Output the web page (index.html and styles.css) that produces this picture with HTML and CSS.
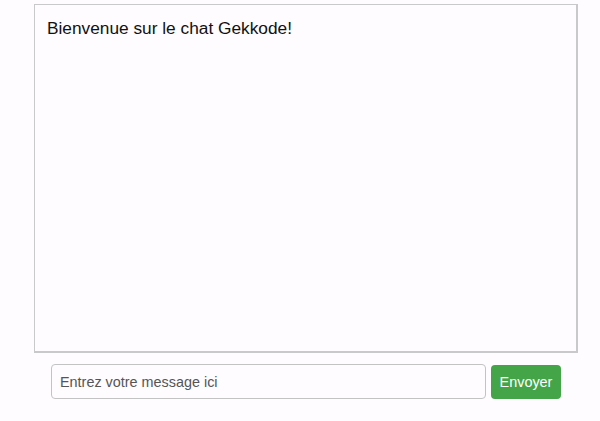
FILE: index.html
```html
<!DOCTYPE html>
<html lang="fr">
<head>
<meta charset="utf-8">
<title>Chat Gekkode</title>
<link rel="stylesheet" href="styles.css">
</head>
<body>
<div class="chat">
  <div class="messages">
    <p class="message">Bienvenue sur le chat Gekkode!</p>
  </div>
  <form class="composer">
    <input class="field" type="text" placeholder="Entrez votre message ici">
    <button class="send" type="button">Envoyer</button>
  </form>
</div>
</body>
</html>
```
FILE: styles.css
```css
html, body {
  margin: 0;
  padding: 0;
  background: #fefcfe;
  font-family: "Liberation Sans", Arial, sans-serif;
}
.chat {
  padding-top: 4px;
  display: flex;
  flex-direction: column;
}
.messages {
  box-sizing: border-box;
  margin-left: 34px;
  width: 544px;
  height: 349px;
  border: 1px solid #c9c8ca;
  border-width: 1px 2px 2px 1px;
  background: #fefcfe;
  padding: 12px 12px;
}
.message {
  margin: 0;
  font-size: 17.3px;
  line-height: 22px;
  color: #111;
}
.composer {
  display: flex;
  align-items: center;
  margin: 11px 0 0 51px;
  gap: 5px;
}
.field {
  box-sizing: border-box;
  width: 435px;
  height: 35px;
  border: 1px solid #c3c3c3;
  border-radius: 4px;
  padding: 0 8px;
  font-family: "Liberation Sans", Arial, sans-serif;
  font-size: 14.4px;
  background: #fefcfe;
  color: #333;
}
.field::placeholder {
  color: #555;
}
.send {
  box-sizing: border-box;
  width: 70px;
  height: 34px;
  border: none;
  border-radius: 4px;
  background: #43a548;
  color: #fff;
  font-family: "Liberation Sans", Arial, sans-serif;
  font-size: 14.4px;
  padding: 0;
}
```
